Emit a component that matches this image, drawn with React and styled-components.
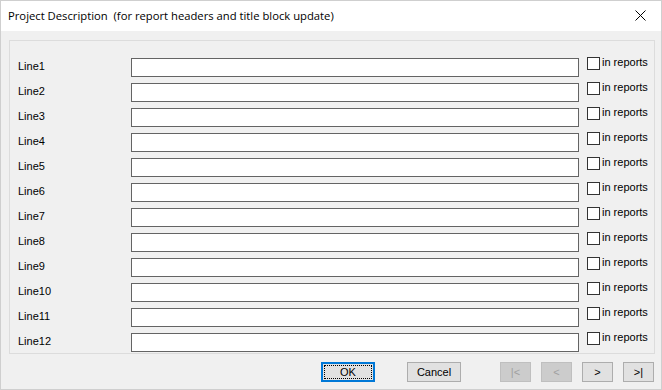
import React from "react";
import styled, { createGlobalStyle } from "styled-components";

const Global = createGlobalStyle`
  html, body { margin: 0; padding: 0; background: #f0f0f0; }
  * { box-sizing: border-box; }
`;

const Window = styled.div`
  width: 662px;
  height: 390px;
  border: 1px solid #cfcfcf;
  background: #f0f0f0;
  display: flex;
  flex-direction: column;
  font-family: "Liberation Sans", Arial, sans-serif;
  font-size: 11px;
  color: #000;
`;

const TitleBar = styled.div`
  height: 30px;
  background: #fff;
  display: flex;
  align-items: center;
  justify-content: space-between;
  padding: 0 15px 1px 7px;
`;

const Title = styled.span`
  font-family: "Open Sans", "Noto Sans", sans-serif;
  font-size: 11.25px;
  white-space: pre;
`;

const Body = styled.div`
  flex: 1;
  padding: 9px 6px 0 8px;
  display: flex;
  flex-direction: column;
`;

const Group = styled.div`
  border: 1px solid #dcdcdc;
  padding: 17px 0 1px 8px;
  display: grid;
  grid-template-columns: 105px 448px auto;
  column-gap: 8px;
  row-gap: 6px;
  align-items: start;
`;

const Label = styled.label`
  height: 19px;
  display: flex;
  align-items: center;
  margin-top: -2px;
`;

const Input = styled.input`
  height: 19px;
  margin: 0;
  border: 1px solid #646464;
  background: #fff;
  outline: none;
  padding: 0 2px;
  font: inherit;
`;

const Check = styled.div`
  display: flex;
  align-items: flex-start;
  gap: 2px;
  margin-top: -1px;
  white-space: nowrap;
`;

const Box = styled.span`
  width: 13px;
  height: 13px;
  border: 1px solid #333;
  background: #fff;
  flex: none;
`;

const CheckText = styled.span`
  line-height: 13px;
  margin-top: -1px;
`;

const Footer = styled.div`
  display: flex;
  align-items: center;
  padding-top: 8px;
  padding-left: 312px;
`;

const Button = styled.button`
  height: 20px;
  width: ${(p) => p.w || 54}px;
  margin: 0 0 0 ${(p) => p.ml || 0}px;
  padding: 0;
  font-family: "Liberation Sans", Arial, sans-serif;
  font-size: 11px;
  color: ${(p) => (p.disabled ? "#a0a0a0" : "#000")};
  background: ${(p) => (p.disabled ? "#cccccc" : "#e1e1e1")};
  border: ${(p) =>
    p.primary ? "2px solid #0078d7" : p.disabled ? "1px solid #bfbfbf" : "1px solid #adadad"};
  position: relative;
  display: flex;
  align-items: center;
  justify-content: center;
`;

const Focus = styled.span`
  position: absolute;
  inset: 1px;
  border: 1px dotted #000;
`;

const CloseIcon = () => (
  <svg width="11" height="11" viewBox="0 0 11 11">
    <path d="M0.5 0.5 L10.5 10.5 M10.5 0.5 L0.5 10.5" stroke="#000" strokeWidth="1" />
  </svg>
);

const lines = Array.from({ length: 12 }, (_, i) => `Line${i + 1}`);

export default function App() {
  return (
    <>
      <Global />
      <Window>
        <TitleBar>
          <Title>{"Project Description  (for report headers and title block update)"}</Title>
          <CloseIcon />
        </TitleBar>
        <Body>
          <Group>
            {lines.map((l) => (
              <React.Fragment key={l}>
                <Label>{l}</Label>
                <Input />
                <Check>
                  <Box />
                  <CheckText>in reports</CheckText>
                </Check>
              </React.Fragment>
            ))}
          </Group>
          <Footer>
            <Button primary>
              <Focus />
              OK
            </Button>
            <Button ml={32}>Cancel</Button>
            <Button ml={39} w={31} disabled>|&lt;</Button>
            <Button ml={10} w={31} disabled>&lt;</Button>
            <Button ml={10} w={31}>&gt;</Button>
            <Button ml={10} w={31}>&gt;|</Button>
          </Footer>
        </Body>
      </Window>
    </>
  );
}
